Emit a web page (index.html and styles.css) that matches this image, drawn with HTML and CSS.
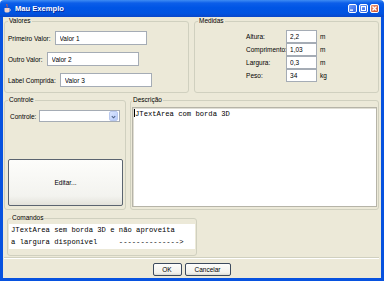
FILE: index.html
```html
<!DOCTYPE html>
<html lang="pt">
<head>
    <meta charset="UTF-8">
    <title>Mau Exemplo</title>
    <link rel="stylesheet" href="styles.css">
</head>
<body>
    <div class="window">
        <div class="titlebar">
            <svg class="app-icon" width="7" height="9" viewBox="0 0 7 9">
                <path d="M3 0 C2 1.5 4 2 3 3.5" stroke="#e05a3a" stroke-width="1" fill="none"/>
                <path d="M0.5 4 H5.5 V7 C5.5 8 4.5 8.5 3 8.5 C1.5 8.5 0.5 8 0.5 7 Z" fill="#f2d2c8"/>
                <path d="M5.5 5 C7 5 7 7 5.3 7" stroke="#f2d2c8" stroke-width="0.8" fill="none"/>
            </svg>
            <span class="title">Mau Exemplo</span>
            <div class="wbtns">
                <span class="wbtn">
                    <svg width="7" height="7" viewBox="0 0 7 7"><rect x="1" y="4.5" width="3" height="1.3" fill="#fff"/></svg>
                </span>
                <span class="wbtn">
                    <svg width="7" height="7" viewBox="0 0 7 7"><rect x="1.5" y="1.5" width="4" height="4" fill="none" stroke="#fff" stroke-width="1"/><rect x="1.5" y="1" width="4" height="1.2" fill="#fff"/></svg>
                </span>
                <span class="wbtn close">
                    <svg width="7" height="7" viewBox="0 0 7 7"><path d="M1.5 1.5 L5.5 5.5 M5.5 1.5 L1.5 5.5" stroke="#fff" stroke-width="1.3"/></svg>
                </span>
            </div>
        </div>

        <div class="frame">
            <div class="row-top">
                <fieldset class="group valores">
                    <legend>Valores</legend>
                    <div class="fields">
                        <div class="field"><label>Primeiro Valor:</label><input class="text-input" value="Valor 1"></div>
                        <div class="field"><label>Outro Valor:</label><input class="text-input" value="Valor 2"></div>
                        <div class="field"><label>Label Comprida:</label><input class="text-input" value="Valor 3"></div>
                    </div>
                </fieldset>
                <fieldset class="group medidas">
                    <legend>Medidas</legend>
                    <div class="medidas-grid">
                        <label>Altura:</label><input class="num-input" value="2,2"><span class="unit">m</span>
                        <label>Comprimento:</label><input class="num-input" value="1,03"><span class="unit">m</span>
                        <label>Largura:</label><input class="num-input" value="0,3"><span class="unit">m</span>
                        <label>Peso:</label><input class="num-input" value="34"><span class="unit">kg</span>
                    </div>
                </fieldset>
            </div>

            <div class="row-middle">
                <fieldset class="group controle">
                    <legend>Controle</legend>
                    <div class="combo-row">
                        <label>Controle:</label>
                        <div class="combo">
                            <span class="combo-arrow">
                                <svg width="9" height="10" viewBox="0 0 9 10"><path d="M2.3 3.8 L4.5 6 L6.7 3.8" stroke="#4d6185" stroke-width="1.4" fill="none"/></svg>
                            </span>
                        </div>
                    </div>
                    <button class="btn-editar">Editar...</button>
                </fieldset>
                <fieldset class="group descricao">
                    <legend>Descrição</legend>
                    <div class="textarea-3d"><span class="caret"></span>JTextArea com borda 3D</div>
                </fieldset>
            </div>

            <fieldset class="group comandos">
                <legend>Comandos</legend>
                <div class="textarea-flat">JTextArea sem borda 3D e não aproveita
a largura disponível     --------------&gt;</div>
            </fieldset>

            <div class="button-bar">
                <button class="btn btn-ok">OK</button>
                <button class="btn btn-cancel">Cancelar</button>
            </div>
        </div>
    </div>
</body>
</html>
```

FILE: styles.css
```css
* {
    box-sizing: border-box;
}

body {
    margin: 0;
    background: #ffffff;
    font-family: "Liberation Sans", Arial, sans-serif;
    font-size: 6.5px;
    color: #000;
}

.window {
    width: 384px;
    height: 281px;
    display: flex;
    flex-direction: column;
}

.titlebar {
    height: 17px;
    display: flex;
    align-items: center;
    gap: 4px;
    padding: 0 5px 0 4px;
    background: linear-gradient(#3f8cf3 0%, #0c5ee9 18%, #0055e5 45%, #0153e0 80%, #0a47c8 100%);
    border-radius: 4px 4px 0 0;
}

.app-icon {
    flex: 0 0 auto;
}

.title {
    flex: 1;
    color: #fff;
    font-weight: bold;
    font-size: 7.6px;
    text-shadow: 1px 1px #0b2b9a;
}

.wbtns {
    display: flex;
    gap: 2px;
}

.wbtn {
    width: 9px;
    height: 9px;
    display: flex;
    align-items: center;
    justify-content: center;
    border: 1px solid #fff;
    border-radius: 2px;
    background: linear-gradient(135deg, #6f9cf8, #2e62e6);
}

.wbtn.close {
    background: linear-gradient(135deg, #ec9a78, #d0461f);
}

.frame {
    flex: 1;
    display: flex;
    flex-direction: column;
    background: #ece9d8;
    border: 3px solid #0752df;
    border-top: 0;
    padding: 0 2px 0 1px;
}

/* caixas com titulo */
.group {
    margin: 0;
    padding: 0 3px 3px;
    border: 1px solid #d0d0bf;
    border-radius: 3px;
    min-width: 0;
}

.group legend {
    padding: 0 1px;
    margin-left: 0;
    line-height: 8px;
    font-size: 6.5px;
    color: #000;
}

.row-top {
    display: flex;
    gap: 5px;
    height: 76px;
}

.row-top .group {
    flex: 1;
}

.fields {
    display: flex;
    flex-direction: column;
    gap: 7px;
    margin-top: 6px;
}

.field {
    display: flex;
    align-items: center;
    gap: 4px;
    height: 14px;
}

.text-input,
.num-input {
    font-family: "Liberation Sans", Arial, sans-serif;
    font-size: 6.5px;
    color: #000;
    background: #fff;
    border: 1px solid #a5acb5;
    outline: none;
    margin: 0;
}

.text-input {
    width: 92px;
    height: 14px;
    padding: 0 4px;
}

.medidas-grid {
    display: grid;
    grid-template-columns: 40px 31px auto;
    grid-auto-rows: 13px;
    align-items: center;
    justify-content: center;
    margin-top: 5px;
}

.num-input {
    width: 31px;
    height: 13px;
    padding: 0 3px;
}

.unit {
    padding-left: 3px;
}

.row-middle {
    display: flex;
    gap: 4px;
    height: 114px;
    margin-top: 3px;
}

.controle {
    width: 122px;
    display: flex;
    flex-direction: column;
}

.combo-row {
    display: flex;
    align-items: center;
    gap: 3px;
    margin-top: 6px;
    margin-left: 2px;
}

.combo {
    width: 81px;
    height: 12px;
    display: flex;
    justify-content: flex-end;
    align-items: center;
    padding-right: 1px;
    background: #fff;
    border: 1px solid #a5acb5;
}

.combo-arrow {
    width: 9px;
    height: 10px;
    display: flex;
    border-radius: 2px;
    background: linear-gradient(135deg, #dbe6fe, #b7cbfa);
    border: 1px solid #b9c9ef;
}

.btn-editar {
    margin-top: auto;
    height: 47px;
    width: 115px;
    font-family: "Liberation Sans", Arial, sans-serif;
    font-size: 6.5px;
    color: #000;
    background: linear-gradient(#fdfdfb, #f3f3ef 80%, #e3e2da);
    border: 1px solid #5b6470;
    border-radius: 2px;
}

.descricao {
    flex: 1;
    padding: 0 1px 2px;
    display: flex;
    flex-direction: column;
}

.textarea-3d {
    flex: 1;
    margin-top: 3px;
    padding: 1px 1px;
    background: #fff;
    border: 1px solid #b6b4a8;
    box-shadow: inset 1px 1px #e0ded4;
    font-family: "Liberation Mono", "Courier New", monospace;
    font-size: 7.2px;
    line-height: 9px;
}

.caret {
    display: inline-block;
    width: 0;
    height: 8px;
    border-left: 1px solid #000;
    vertical-align: -1px;
}

.comandos {
    width: 190px;
    height: 42px;
    margin-top: 4px;
    margin-left: 3px;
    padding: 0 1px 2px;
}

.comandos legend {
    margin-left: 2px;
}

.textarea-flat {
    margin-top: 2px;
    padding: 1px 2px;
    background: #fff;
    font-family: "Liberation Mono", "Courier New", monospace;
    font-size: 7.2px;
    line-height: 11.5px;
    white-space: pre;
}

.button-bar {
    flex: 1;
    display: flex;
    justify-content: center;
    align-items: center;
    gap: 3px;
    margin-top: 1px;
    padding-top: 3px;
    border-top: 1px solid #d0d0bf;
    box-shadow: inset 0 1px #fff;
}

.btn {
    height: 13px;
    padding: 0;
    font-family: "Liberation Sans", Arial, sans-serif;
    font-size: 6.5px;
    color: #000;
    background: linear-gradient(#fdfdfb, #f1f1ec 80%, #dcdbd2);
    border: 1px solid #3c4a5e;
    border-radius: 2px;
}

.btn-ok {
    width: 29px;
}

.btn-cancel {
    width: 46px;
}
```
